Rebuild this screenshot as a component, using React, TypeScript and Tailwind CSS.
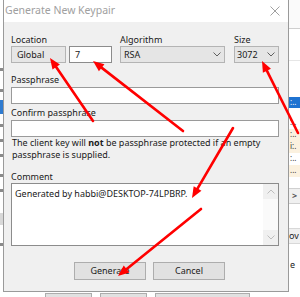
import React from "react";

type Pt = { x1: number; y1: number; x2: number; y2: number };

// red annotation arrows drawn over the dialog
function Arrow({ x1, y1, x2, y2 }: Pt) {
  const dx = x2 - x1;
  const dy = y2 - y1;
  const len = Math.hypot(dx, dy);
  const ux = dx / len;
  const uy = dy / len;
  const hl = 11;
  const hw = 4.5;
  const bx = x2 - ux * hl;
  const by = y2 - uy * hl;
  const px = -uy;
  const py = ux;
  const pts = `${x2},${y2} ${bx + px * hw},${by + py * hw} ${bx - px * hw},${by - py * hw}`;
  return (
    <g>
      <line x1={x1} y1={y1} x2={bx + ux} y2={by + uy} stroke="#ff0000" strokeWidth={2.6} strokeLinecap="round" />
      <polygon points={pts} fill="#ff0000" />
    </g>
  );
}

function Chevron({ up, color = "#606060" }: { up?: boolean; color?: string }) {
  return (
    <svg width="8" height="5" viewBox="0 0 8 5">
      <path d={up ? "M0.5 4.5 L4 1 L7.5 4.5" : "M0.5 0.5 L4 4 L7.5 0.5"} fill="none" stroke={color} strokeWidth="1" />
    </svg>
  );
}

function Label({ children }: { children: React.ReactNode }) {
  return <div className="h-[12px] text-[9px] leading-[12px] text-[#1a1a1a]">{children}</div>;
}

function RightStrip() {
  return (
    <div className="flex h-full w-[11px] flex-col overflow-hidden bg-white text-[8px] leading-[10px] text-[#333]">
      <div className="h-[28px] bg-[#fafafa]" />
      <div className="h-[32px] border-t border-[#cfcfcf]" />
      <div className="h-[37px] border-t border-[#e6e6e6]" />
      <div className="h-[11px] bg-[#1f73d1] pl-[1px] text-white">:..</div>
      <div className="mt-[9px] h-[12px] pl-[1px]">:..</div>
      <div className="h-[12px] bg-[#fbf1df] pl-[1px]">:..</div>
      <div className="h-[12px] bg-[#fbf1df] pl-[1px]">i:.</div>
      <div className="h-[12px] pl-[1px]">:..</div>
      <div className="h-[12px] bg-[#fbf1df] pl-[1px]">...</div>
      <div className="mt-[11px] flex h-[16px] items-center border-y border-[#d0d0d0] bg-[#f0f0f0] pl-[3px] text-[9px] font-bold text-[#555]">
        &gt;
      </div>
      <div className="mt-[24px] flex h-[16px] items-center border-y border-[#d8d8d8] bg-[#f0f0f0] text-[9px] text-[#222]">
        ov
      </div>
      <div className="mt-[16px] pl-[1px] text-[9px] text-[#222]">e</div>
    </div>
  );
}

function LeftStrip() {
  return (
    <div className="flex h-full w-[3px] flex-col bg-white">
      <div className="mt-[68px] h-[3px] bg-[#8a8a8a]" />
      <div className="mt-[18px] h-[3px] bg-[#8a8a8a]" />
      <div className="mt-[8px] h-[14px] bg-[#2f7bd0]" />
      <div className="mt-[10px] h-[3px] bg-[#8a8a8a]" />
      <div className="mt-[12px] h-[3px] bg-[#8a8a8a]" />
      <div className="mt-[12px] h-[3px] bg-[#8a8a8a]" />
      <div className="mt-[17px] h-[3px] bg-[#8a8a8a]" />
      <div className="mt-[12px] h-[3px] bg-[#8a8a8a]" />
      <div className="mt-[21px] h-[12px] bg-[#d8d8d8]" />
      <div className="mt-[18px] h-[3px] bg-[#8a8a8a]" />
    </div>
  );
}

function Dialog() {
  return (
    <div className="flex w-[286px] flex-col">
      <div className="flex h-[292px] flex-col border-x border-b border-[#9a9a9a] bg-[#f0f0f0]">
        {/* Title bar */}
        <div className="flex h-[22px] items-center justify-between bg-white pl-[1px] pr-[8px]">
          <span className="text-[10.5px] text-[#a0a0a0]">Generate New Keypair</span>
          <svg width="10" height="10" viewBox="0 0 10 10">
            <path d="M0.5 0.5 L9.5 9.5 M9.5 0.5 L0.5 9.5" stroke="#a0a0a0" strokeWidth="1" />
          </svg>
        </div>

        {/* Body */}
        <div className="flex flex-col pl-[7px] pt-[12px]">
          <div className="flex">
            <div className="flex w-[101px] flex-col">
              <Label>Location</Label>
              <div className="flex">
                <div className="flex h-[17px] w-[55px] items-center border border-[#b4b4b4] bg-[#e6e6e6] pl-[5px] text-[9px] text-[#1a1a1a]">
                  Global
                </div>
                <div className="ml-[3px] flex h-[17px] w-[43px] items-center border border-[#8c8c8c] bg-white pl-[5px] text-[9px] text-[#1a1a1a]">
                  7
                </div>
              </div>
            </div>
            <div className="ml-[8px] flex w-[105px] flex-col">
              <Label>Algorithm</Label>
              <div className="flex h-[17px] items-center justify-between border border-[#b4b4b4] bg-[#e5e5e5] pl-[3px] pr-[3px] text-[9px] text-[#1a1a1a]">
                RSA
                <Chevron />
              </div>
            </div>
            <div className="ml-[9px] flex w-[45px] flex-col">
              <Label>Size</Label>
              <div className="flex h-[17px] items-center justify-between border border-[#b4b4b4] bg-[#e5e5e5] pl-[2px] pr-[3px] text-[9px] text-[#1a1a1a]">
                3072
                <Chevron />
              </div>
            </div>
          </div>

          <div className="mt-[11px] w-[268px]">
            <Label>Passphrase</Label>
            <div className="mt-[1px] h-[17px] border border-[#9a9a9a] bg-white" />
          </div>

          <div className="mt-[3px] w-[268px]">
            <Label>Confirm passphrase</Label>
            <div className="mt-[1px] h-[17px] border border-[#9a9a9a] bg-white" />
          </div>

          <p className="w-[268px] pl-[1px] text-[9px] leading-[12px] text-[#1a1a1a]">
            The client key will <span className="font-bold">not</span> be passphrase protected if an empty
            <br />
            passphrase is supplied.
          </p>

          <div className="mt-[10px] w-[268px]">
            <Label>Comment</Label>
            <div className="flex h-[63px] border border-[#8c8c8c] bg-white">
              <div className="flex-1 pl-[3px] pt-[4px] text-[9px] leading-[12px] text-[#1a1a1a]">
                Generated by habbi@DESKTOP-74LPBRP.
              </div>
              <div className="flex w-[15px] flex-col justify-between bg-[#fafafa]">
                <div className="flex h-[15px] items-center justify-center bg-[#f0f0f0]">
                  <Chevron up color="#bdbdbd" />
                </div>
                <div className="flex h-[15px] items-center justify-center bg-[#f0f0f0]">
                  <Chevron color="#bdbdbd" />
                </div>
              </div>
            </div>
          </div>

          <div className="mt-[16px] flex w-[277px] justify-center gap-[7px]">
            <button className="flex h-[18px] w-[72px] items-center justify-center border border-[#adadad] bg-[#e1e1e1] text-[9px] text-[#1a1a1a]">
              Generate
            </button>
            <button className="flex h-[18px] w-[72px] items-center justify-center border border-[#adadad] bg-[#e1e1e1] text-[9px] text-[#1a1a1a]">
              Cancel
            </button>
          </div>
        </div>
      </div>

      {/* background window peeking below the dialog */}
      <div className="flex h-[5px] gap-[8px] bg-white pl-[42px] pt-[1px]">
        <div className="w-[47px] border-x border-t border-[#adadad] bg-[#e1e1e1]" />
        <div className="w-[47px] border-x border-t border-[#adadad] bg-[#e1e1e1]" />
        <div className="w-[95px] border-x border-t border-[#adadad] bg-[#e1e1e1]" />
      </div>
    </div>
  );
}

export default function App() {
  return (
    <div
      className="relative flex h-[297px] w-[300px] overflow-hidden bg-white"
      style={{ fontFamily: '"Noto Sans", "Open Sans", sans-serif' }}
    >
      <LeftStrip />
      <Dialog />
      <RightStrip />

      <svg className="pointer-events-none absolute inset-0" width="300" height="297" viewBox="0 0 300 297">
        <Arrow x1={93} y1={121} x2={50} y2={58} />
        <Arrow x1={183} y1={131} x2={93} y2={61} />
        <Arrow x1={233} y1={128} x2={192} y2={198} />
        <Arrow x1={201} y1={209} x2={118} y2={276} />
        <Arrow x1={298} y1={133} x2={262} y2={61} />
      </svg>
    </div>
  );
}
